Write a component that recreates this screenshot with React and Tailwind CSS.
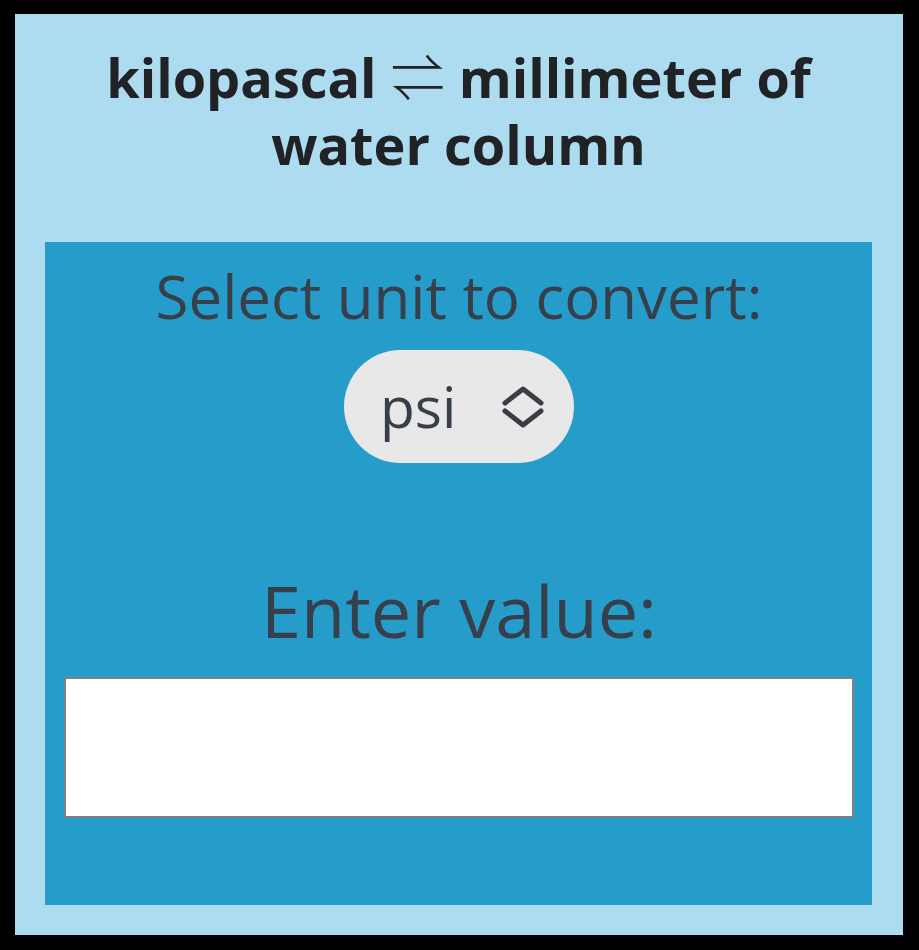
import React, { useState } from 'react';

const font = { fontFamily: '"Open Sans", "DejaVu Sans", sans-serif' };

const UpDown = () => (
    <svg width="42" height="42" viewBox="0 0 42 42" fill="none" stroke="#3a3d44" strokeWidth="5" strokeLinecap="round" strokeLinejoin="round">
        <path d="M3 17 L21 3 L39 17" />
        <path d="M3 25 L21 39 L39 25" />
    </svg>
);

const App = () => {
    const [unit, setUnit] = useState('psi');
    const [value, setValue] = useState('');

    return (
        <div className="min-h-screen bg-black pt-[14px] pl-[15px]" style={font}>
            <div className="w-[888px] h-[921px] bg-[#addbef] p-[30px] pr-[31px] flex flex-col">
                <h1 className="text-center font-bold text-[54px] leading-[67px] text-[#212226]">
                    kilopascal <span className="font-light font-['Noto_Sans_CJK_JP','DejaVu_Sans',sans-serif] text-[54px] leading-none">⇌</span> millimeter of water column
                </h1>

                <div className="mt-[64px] flex-1 bg-[#259cca] flex flex-col items-center pl-[19px] pr-[18px] pt-[9px]">
                    <label className="text-[60px] text-[#373f4b]">Select unit to convert:</label>

                    <div className="mt-[9px] w-[230px] h-[113px] rounded-full bg-[#e8e8e8] flex items-center justify-between pl-[36px] pr-[30px]">
                        <span className="text-[57px] text-[#373f4b]">{unit}</span>
                        <UpDown />
                    </div>

                    <label className="mt-[93px] text-[72px] text-[#373f4b]">Enter value:</label>

                    <input
                        type="text"
                        value={value}
                        onChange={(e) => setValue(e.target.value)}
                        className="mt-[13px] w-full h-[141px] bg-white border-2 border-[#808080] outline-none text-[40px] px-3"
                    />
                </div>
            </div>
        </div>
    );
};

export default App;
